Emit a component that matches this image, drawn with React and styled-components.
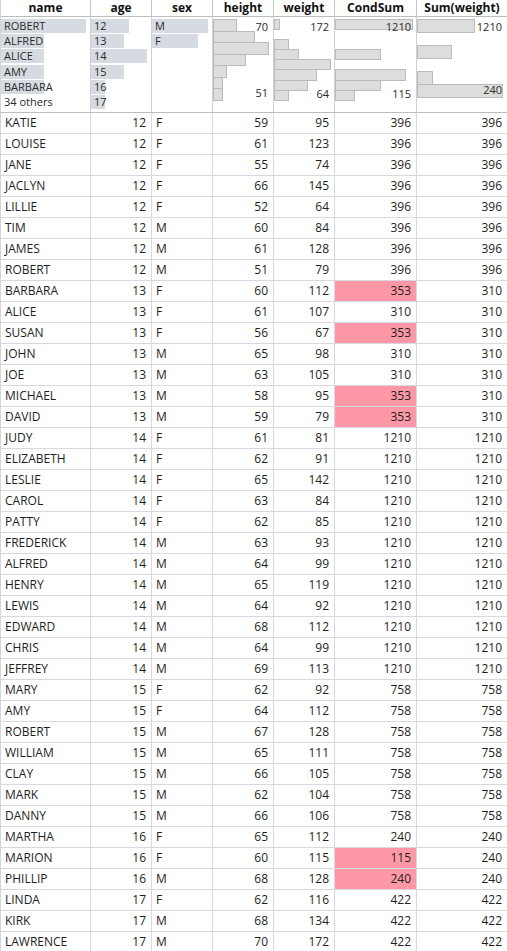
import React from "react";
import styled, { createGlobalStyle } from "styled-components";

const rows = [
  ["KATIE", 12, "F", 59, 95, 396, 396],
  ["LOUISE", 12, "F", 61, 123, 396, 396],
  ["JANE", 12, "F", 55, 74, 396, 396],
  ["JACLYN", 12, "F", 66, 145, 396, 396],
  ["LILLIE", 12, "F", 52, 64, 396, 396],
  ["TIM", 12, "M", 60, 84, 396, 396],
  ["JAMES", 12, "M", 61, 128, 396, 396],
  ["ROBERT", 12, "M", 51, 79, 396, 396],
  ["BARBARA", 13, "F", 60, 112, 353, 310, true],
  ["ALICE", 13, "F", 61, 107, 310, 310],
  ["SUSAN", 13, "F", 56, 67, 353, 310, true],
  ["JOHN", 13, "M", 65, 98, 310, 310],
  ["JOE", 13, "M", 63, 105, 310, 310],
  ["MICHAEL", 13, "M", 58, 95, 353, 310, true],
  ["DAVID", 13, "M", 59, 79, 353, 310, true],
  ["JUDY", 14, "F", 61, 81, 1210, 1210],
  ["ELIZABETH", 14, "F", 62, 91, 1210, 1210],
  ["LESLIE", 14, "F", 65, 142, 1210, 1210],
  ["CAROL", 14, "F", 63, 84, 1210, 1210],
  ["PATTY", 14, "F", 62, 85, 1210, 1210],
  ["FREDERICK", 14, "M", 63, 93, 1210, 1210],
  ["ALFRED", 14, "M", 64, 99, 1210, 1210],
  ["HENRY", 14, "M", 65, 119, 1210, 1210],
  ["LEWIS", 14, "M", 64, 92, 1210, 1210],
  ["EDWARD", 14, "M", 68, 112, 1210, 1210],
  ["CHRIS", 14, "M", 64, 99, 1210, 1210],
  ["JEFFREY", 14, "M", 69, 113, 1210, 1210],
  ["MARY", 15, "F", 62, 92, 758, 758],
  ["AMY", 15, "F", 64, 112, 758, 758],
  ["ROBERT", 15, "M", 67, 128, 758, 758],
  ["WILLIAM", 15, "M", 65, 111, 758, 758],
  ["CLAY", 15, "M", 66, 105, 758, 758],
  ["MARK", 15, "M", 62, 104, 758, 758],
  ["DANNY", 15, "M", 66, 106, 758, 758],
  ["MARTHA", 16, "F", 65, 112, 240, 240],
  ["MARION", 16, "F", 60, 115, 115, 240, true],
  ["PHILLIP", 16, "M", 68, 128, 240, 240, true],
  ["LINDA", 17, "F", 62, 116, 422, 422],
  ["KIRK", 17, "M", 68, 134, 422, 422],
  ["LAWRENCE", 17, "M", 70, 172, 422, 422],
];

const columns = ["name", "age", "sex", "height", "weight", "CondSum", "Sum(weight)"];
const widths = "90px 61px 61px 61px 61px 82px 90px";

const nameLevels = [["ROBERT", 85], ["ALFRED", 43], ["ALICE", 43], ["AMY", 43], ["BARBARA", 43], ["34 others", 0]];
const ageLevels = [["12", 38], ["13", 33], ["14", 56], ["15", 33], ["16", 14], ["17", 14]];
const sexLevels = [["M", 56], ["F", 46]];

const histograms = [
  { bin: 11.5, bars: [24, 42, 56, 33, 14, 10, 10], top: "70", bottom: "51", bottomAt: 69 },
  { bin: 10.1, bars: [6, 0, 15, 25, 57, 43, 34, 15], top: "172", bottom: "64", bottomAt: 70 },
  { bin: 10.1, bars: [78, 0, 0, 46, 0, 71, 46, 20], top: "1210", bottom: "115", bottomAt: 70 },
  { bin: 13, bars: [58, 0, 35, 0, 16, 86], top: "1210", bottom: "240", bottomAt: 66 },
];

const GlobalStyle = createGlobalStyle`
    body {
        margin: 0;
        background: #ffffff;
        font-family: "Open Sans", "Noto Sans", sans-serif;
        color: #1e1e1e;
    }
`;

const Table = styled.div`
    width: 507px;
    border-left: 1px solid #d4d4dc;
    box-sizing: border-box;
    overflow: hidden;
`;

const Row = styled.div`
    display: grid;
    grid-template-columns: ${ widths };
    height: ${ ({ h }) => h }px;
    border-bottom: 1px solid ${ ({ dark }) => dark ? "#bdbdbd" : "#d8d8e0" };
`;

const HeadCell = styled.div`
    font-weight: 700;
    font-size: 12px;
    line-height: 16px;
    text-align: center;
    border-right: 1px solid #c4c4c4;
    white-space: nowrap;
    color: #111;
    &:last-child { border-right: none; }
`;

const SumCell = styled.div`
    position: relative;
    padding-top: 2px;
    border-right: 1px solid #d0d0d6;
    &:last-child { border-right: none; }
`;

const Level = styled.div`
    position: relative;
    height: 14px;
    margin-bottom: 1.2px;
    font-size: 11px;
    line-height: 14px;
    padding-left: ${ ({ pad }) => pad }px;
    white-space: nowrap;
    color: #2a2a2a;
`;

const LevelBar = styled.div`
    position: absolute;
    left: 0;
    top: 0;
    height: 14px;
    background: #d6dbe2;
    z-index: -1;
`;

const Bars = styled.div`
    display: flex;
    flex-direction: column;
    position: relative;
    z-index: 0;
`;

const Bar = styled.div`
    box-sizing: border-box;
    height: ${ ({ h }) => h + 1 }px;
    margin-bottom: -1px;
    background: #dcdedb;
    border: 1px solid #b9bcb9;
    ${ ({ empty }) => empty && "visibility: hidden;" }
`;

const HistLabel = styled.div`
    position: absolute;
    right: 5px;
    font-size: 11px;
    line-height: 13px;
    color: #2a2a2a;
    z-index: 1;
`;

const Cell = styled.div`
    font-size: 12px;
    line-height: 20px;
    padding: 0 ${ ({ right }) => right ? "5px" : "0" } 0 ${ ({ right }) => right ? "0" : "4px" };
    text-align: ${ ({ right }) => right ? "right" : "left" };
    background: ${ ({ hot }) => hot ? "#ff98a6" : "transparent" };
    border-right: 1px solid #d8d8e0;
    white-space: nowrap;
    &:last-child { border-right: none; }
`;

const LevelList = ({ levels, pad }) => (
    <SumCell>
        { levels.map(([label, w]) => (
            <Level key={ label } pad={ pad }>
                { w > 0 && <LevelBar style={ { width: w } } /> }
                { label }
            </Level>
        )) }
    </SumCell>
);

const Histogram = ({ bin, bars, top, bottom, bottomAt }) => (
    <SumCell>
        <Bars>
            { bars.map((w, i) => (
                <Bar key={ i } h={ bin } empty={ w === 0 } style={ { width: w } } />
            )) }
        </Bars>
        <HistLabel style={ { top: 3 } }>{ top }</HistLabel>
        <HistLabel style={ { top: bottomAt } }>{ bottom }</HistLabel>
    </SumCell>
);

const App = () => {
    return (
        <>
            <GlobalStyle />
            <Table>
                <Row h={ 16 } dark>
                    { columns.map((c) => <HeadCell key={ c }>{ c }</HeadCell>) }
                </Row>
                <Row h={ 95 } dark>
                    <LevelList levels={ nameLevels } pad={ 3 } />
                    <LevelList levels={ ageLevels } pad={ 3 } />
                    <LevelList levels={ sexLevels } pad={ 3 } />
                    { histograms.map((h, i) => <Histogram key={ i } { ...h } />) }
                </Row>
                { rows.map((r, i) => (
                    <Row key={ i } h={ 20 }>
                        <Cell>{ r[0] }</Cell>
                        <Cell right>{ r[1] }</Cell>
                        <Cell>{ r[2] }</Cell>
                        <Cell right>{ r[3] }</Cell>
                        <Cell right>{ r[4] }</Cell>
                        <Cell right hot={ r[7] }>{ r[5] }</Cell>
                        <Cell right>{ r[6] }</Cell>
                    </Row>
                )) }
            </Table>
        </>
    );
};

export default App;
